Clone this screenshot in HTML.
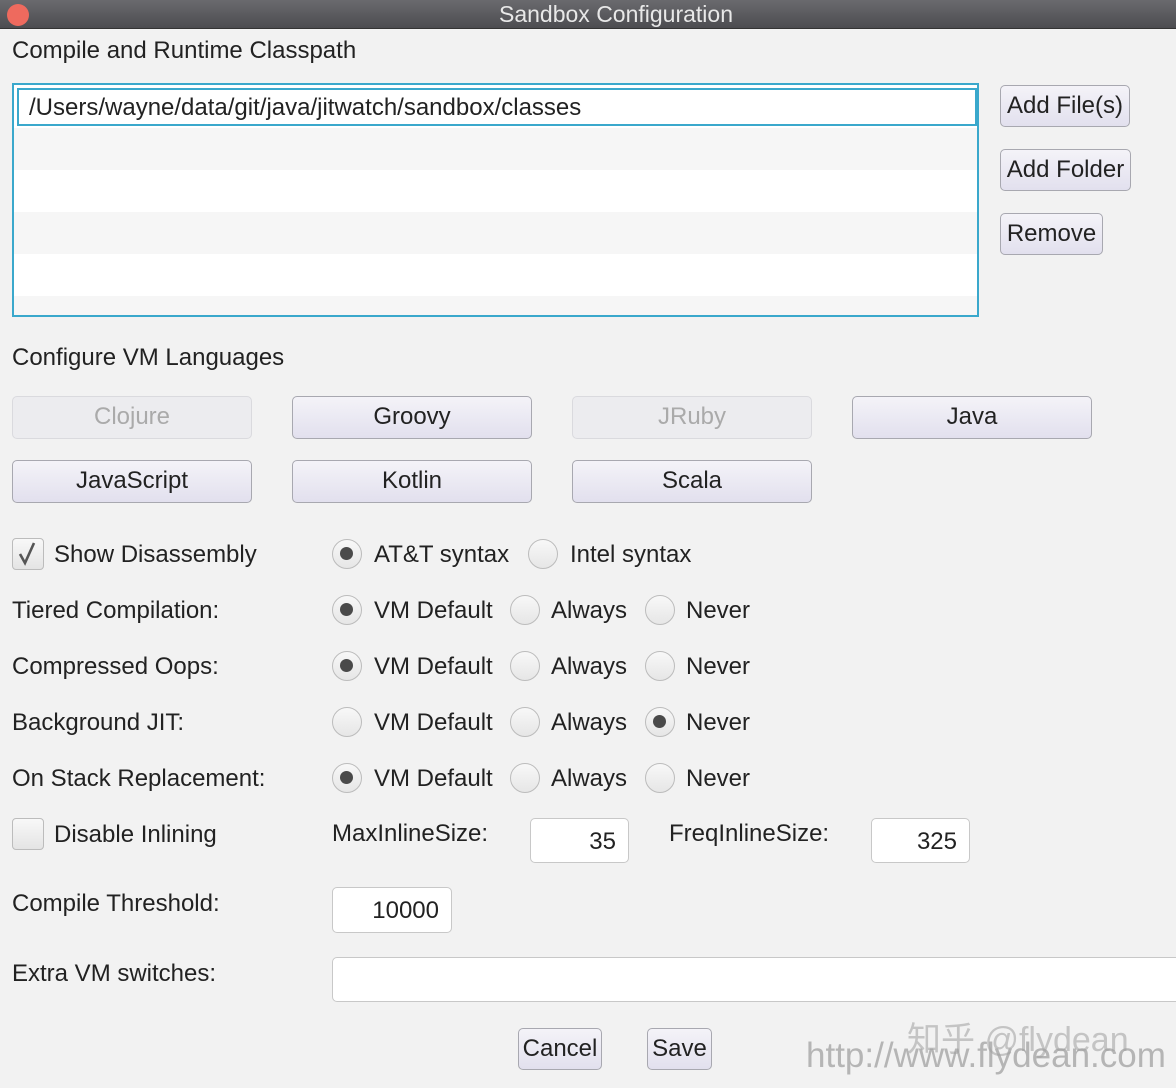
<!DOCTYPE html>
<html><head><meta charset="utf-8"><style>
*{box-sizing:border-box;margin:0;padding:0}
body{width:1176px;height:1088px;background:#f2f2f2;font-family:"Liberation Sans",sans-serif;font-size:24px;color:#222;position:relative;overflow:hidden}
.a{position:absolute;white-space:nowrap}
.t{position:absolute;white-space:nowrap;line-height:28px}
.btn{position:absolute;border:1.5px solid #a8a8b0;border-radius:5px;background:linear-gradient(#f4f3f8,#e2e0ee);text-align:center;line-height:40px;color:#222}
.dis{border-color:#dadade;background:#ececef;color:#aaa}
.r{position:absolute;width:30px;height:30px;border-radius:50%;border:1.5px solid #bcbcbc;background:linear-gradient(#f8f8f8,#e6e6e6)}
.r.on::after{content:"";position:absolute;left:7px;top:7px;width:13px;height:13px;border-radius:50%;background:#4a4a4a}
.tf{position:absolute;background:#fff;border:1.5px solid #c8c8c8;border-radius:5px;text-align:right;padding-right:12px;line-height:45px}
</style></head><body>
<div class="a" style="left:0;top:0;width:1176px;height:29px;background:linear-gradient(#6a6a6e,#4c4c50);border-bottom:1px solid #333;color:#e8e8e8;text-align:center;line-height:29px;font-size:23px;padding-left:56px">Sandbox Configuration</div>
<div class="a" style="left:7px;top:4px;width:22px;height:22px;border-radius:50%;background:#ee6a5e"></div>
<div class="t" style="left:12px;top:37px">Compile and Runtime Classpath</div>
<div class="a" style="left:12px;top:83px;width:967px;height:234px;border:2px solid #3aa8cc;background:#fff">
<div class="a" style="left:0;top:43px;width:963px;height:42px;background:#f6f6f6"></div>
<div class="a" style="left:0;top:127px;width:963px;height:42px;background:#f6f6f6"></div>
<div class="a" style="left:0;top:211px;width:963px;height:19px;background:#f6f6f6"></div>
<div class="a" style="left:3px;top:3px;width:960px;height:38px;border:2px solid #3aa8cc;padding-left:10px;line-height:36px;color:#222">/Users/wayne/data/git/java/jitwatch/sandbox/classes</div>
</div>
<div class="btn" style="left:1000px;top:85px;width:130px;height:42px">Add File(s)</div>
<div class="btn" style="left:1000px;top:149px;width:131px;height:42px">Add Folder</div>
<div class="btn" style="left:1000px;top:213px;width:103px;height:42px">Remove</div>
<div class="t" style="left:12px;top:344px">Configure VM Languages</div>
<div class="btn dis" style="left:12px;top:396px;width:240px;height:43px">Clojure</div>
<div class="btn" style="left:292px;top:396px;width:240px;height:43px">Groovy</div>
<div class="btn dis" style="left:572px;top:396px;width:240px;height:43px">JRuby</div>
<div class="btn" style="left:852px;top:396px;width:240px;height:43px">Java</div>
<div class="btn" style="left:12px;top:460px;width:240px;height:43px">JavaScript</div>
<div class="btn" style="left:292px;top:460px;width:240px;height:43px">Kotlin</div>
<div class="btn" style="left:572px;top:460px;width:240px;height:43px">Scala</div>
<div class="a" style="left:12px;top:538px;width:32px;height:32px;border:1.5px solid #bcbcbc;border-radius:4px;background:linear-gradient(#f8f8f8,#e4e4e4)"><svg width="29" height="29" viewBox="0 0 29 29"><path d="M7 15 L12 24 L21 4" fill="none" stroke="#555" stroke-width="2.6"/></svg></div>
<div class="t" style="left:54px;top:541px">Show Disassembly</div>
<div class="r on" style="left:332px;top:539px"></div><div class="t" style="left:374px;top:541px">AT&amp;T syntax</div>
<div class="r" style="left:528px;top:539px"></div><div class="t" style="left:570px;top:541px">Intel syntax</div>

<div class="t" style="left:12px;top:597px">Tiered Compilation:</div>
<div class="r on" style="left:332px;top:595px"></div><div class="t" style="left:374px;top:597px">VM Default</div>
<div class="r" style="left:510px;top:595px"></div><div class="t" style="left:551px;top:597px">Always</div>
<div class="r" style="left:645px;top:595px"></div><div class="t" style="left:686px;top:597px">Never</div>

<div class="t" style="left:12px;top:653px">Compressed Oops:</div>
<div class="r on" style="left:332px;top:651px"></div><div class="t" style="left:374px;top:653px">VM Default</div>
<div class="r" style="left:510px;top:651px"></div><div class="t" style="left:551px;top:653px">Always</div>
<div class="r" style="left:645px;top:651px"></div><div class="t" style="left:686px;top:653px">Never</div>

<div class="t" style="left:12px;top:709px">Background JIT:</div>
<div class="r" style="left:332px;top:707px"></div><div class="t" style="left:374px;top:709px">VM Default</div>
<div class="r" style="left:510px;top:707px"></div><div class="t" style="left:551px;top:709px">Always</div>
<div class="r on" style="left:645px;top:707px"></div><div class="t" style="left:686px;top:709px">Never</div>

<div class="t" style="left:12px;top:765px">On Stack Replacement:</div>
<div class="r on" style="left:332px;top:763px"></div><div class="t" style="left:374px;top:765px">VM Default</div>
<div class="r" style="left:510px;top:763px"></div><div class="t" style="left:551px;top:765px">Always</div>
<div class="r" style="left:645px;top:763px"></div><div class="t" style="left:686px;top:765px">Never</div>

<div class="a" style="left:12px;top:818px;width:32px;height:32px;border:1.5px solid #bcbcbc;border-radius:4px;background:linear-gradient(#f8f8f8,#e4e4e4)"></div>
<div class="t" style="left:54px;top:821px">Disable Inlining</div>
<div class="t" style="left:332px;top:820px">MaxInlineSize:</div>
<div class="tf" style="left:530px;top:818px;width:99px;height:45px">35</div>
<div class="t" style="left:669px;top:820px">FreqInlineSize:</div>
<div class="tf" style="left:871px;top:818px;width:99px;height:45px">325</div>
<div class="t" style="left:12px;top:890px">Compile Threshold:</div>
<div class="tf" style="left:332px;top:887px;width:120px;height:46px">10000</div>
<div class="t" style="left:12px;top:960px">Extra VM switches:</div>
<div class="tf" style="left:332px;top:957px;width:860px;height:45px"></div>
<div class="btn" style="left:518px;top:1028px;width:84px;height:42px">Cancel</div>
<div class="btn" style="left:647px;top:1028px;width:65px;height:42px">Save</div>
<div class="a" style="left:907px;top:1012px;font-size:34px;color:rgba(180,180,180,.75);font-family:'Liberation Sans','Noto Sans CJK SC',sans-serif">知乎 @flydean</div>
<div class="a" style="left:806px;top:1036px;font-size:35px;color:rgba(160,160,160,.75)">http://www.flydean.com</div>
</body></html>
